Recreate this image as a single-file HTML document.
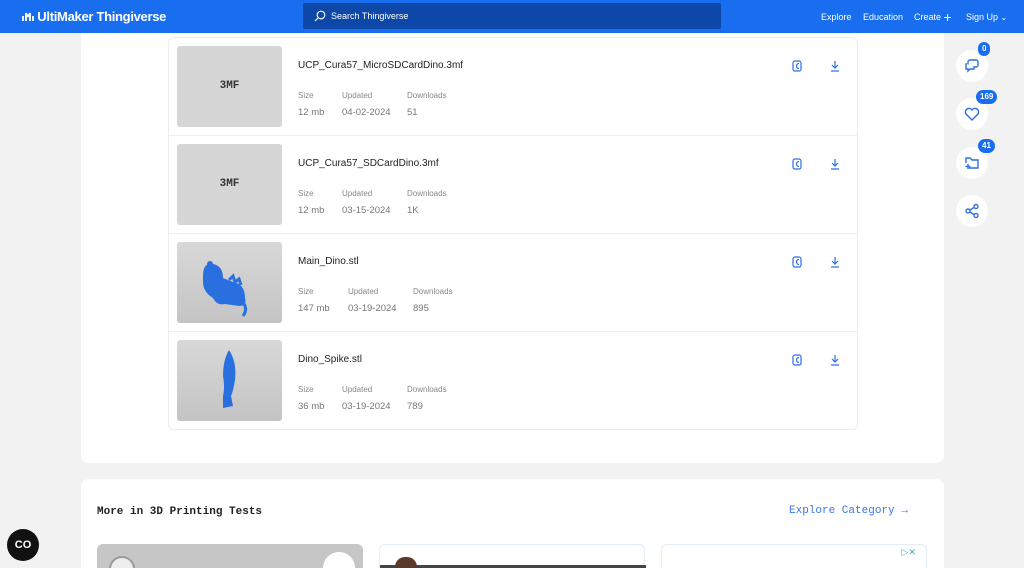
<!DOCTYPE html>
<html><head><meta charset="utf-8"><style>
*{box-sizing:border-box;margin:0;padding:0}
html,body{width:1024px;height:568px;overflow:hidden}
body{background:#f2f2f2;font-family:"Liberation Sans","DejaVu Sans",sans-serif;position:relative}
.hdr{position:absolute;left:0;top:0;width:1024px;height:33px;background:#196ef0;z-index:10}
.logo{position:absolute;left:22px;top:9px;color:#fff;font-size:13px;font-weight:bold;letter-spacing:-0.3px;white-space:nowrap}
.search{position:absolute;left:303px;top:3px;width:418px;height:26px;background:#0d47a8;border-radius:2px;color:#fff;font-size:9px}
.search span{position:absolute;left:28px;top:8px}
.nav{position:absolute;top:12px;color:#fff;font-size:9px;white-space:nowrap}
.card{position:absolute;left:81px;top:0;width:863px;height:463px;background:#fff;border-radius:0 0 8px 8px}
.list{position:absolute;left:168px;top:37px;width:690px;height:393px;border:1px solid #ececec;border-radius:6px;background:#fff}
.row{position:absolute;left:0;width:688px;height:98px;border-bottom:1px solid #eee}
.thumb{position:absolute;left:8px;top:8px;width:105px;height:81px;background:#d6d6d6;border-radius:3px;overflow:hidden;font-family:"Liberation Mono",monospace;font-weight:bold;font-size:11px;color:#333;text-align:center;line-height:81px}
.name{position:absolute;left:129px;top:22px;font-size:10px;color:#222}
.lab{position:absolute;top:53px;font-size:8px;color:#888}
.val{position:absolute;top:69px;font-size:9.5px;color:#777}
.ic{position:absolute;top:22px}
.side{position:absolute;left:956px;width:32px;height:32px;border-radius:50%;background:#fff}
.side svg{position:absolute;left:8px;top:8px}
.badge{position:absolute;height:14px;border-radius:7px;background:#196ef0;color:#fff;font-size:8px;font-weight:bold;text-align:center;line-height:14px;padding:0 4px;top:-8px;left:22px}
.card2{position:absolute;left:81px;top:479px;width:863px;height:89px;background:#fff;border-radius:8px 8px 0 0;overflow:hidden}
</style></head><body>
<div class="hdr">
 <div class="logo"><svg width="12" height="10" viewBox="0 0 12 10" style="vertical-align:-1px"><path d="M1 9V4M4 9V1M4 1L6 5M8 1L6 5M8 9V1M11 9V4" stroke="#fff" stroke-width="1.8" fill="none"/></svg> UltiMaker Thingiverse</div>
 <div class="search"><svg width="12" height="12" viewBox="0 0 12 12" style="position:absolute;left:11px;top:7px"><circle cx="7" cy="5" r="3.8" stroke="#fff" fill="none" stroke-width="1.1"/><path d="M4.3 7.7L1 11" stroke="#fff" stroke-width="1.1"/></svg><span>Search Thingiverse</span></div>
 <div class="nav" style="left:821px">Explore</div>
 <div class="nav" style="left:863px">Education</div>
 <div class="nav" style="left:914px;top:9px">Create <span style="font-size:14px;vertical-align:-2px">+</span></div>
 <div class="nav" style="left:966px">Sign Up <span style="font-size:8px">&#8964;</span></div>
</div>
<div class="card"></div>
<div class="list">
 <div class="row" style="top:0">
  <div class="thumb">3MF</div><div class="name">UCP_Cura57_MicroSDCardDino.3mf</div>
  <div class="lab" style="left:129px">Size</div><div class="lab" style="left:173px">Updated</div><div class="lab" style="left:238px">Downloads</div>
  <div class="val" style="left:129px">12 mb</div><div class="val" style="left:173px">04-02-2024</div><div class="val" style="left:238px">51</div>
  <svg class="ic" style="left:623px" width="10" height="12" viewBox="0 0 10 12"><rect x="1" y="1" width="8" height="10" rx="2" stroke="#2f6fe0" fill="none" stroke-width="1.2"/><path d="M7 3.5A2.5 2.5 0 1 0 7 8.5" stroke="#2f6fe0" fill="none" stroke-width="1.2"/></svg>
  <svg class="ic" style="left:661px" width="10" height="12" viewBox="0 0 10 12"><path d="M5 1V8M2 5L5 8L8 5M1 11H9" stroke="#2f6fe0" fill="none" stroke-width="1.2"/></svg>
 </div>
 <div class="row" style="top:98px">
  <div class="thumb">3MF</div><div class="name">UCP_Cura57_SDCardDino.3mf</div>
  <div class="lab" style="left:129px">Size</div><div class="lab" style="left:173px">Updated</div><div class="lab" style="left:238px">Downloads</div>
  <div class="val" style="left:129px">12 mb</div><div class="val" style="left:173px">03-15-2024</div><div class="val" style="left:238px">1K</div>
  <svg class="ic" style="left:623px" width="10" height="12" viewBox="0 0 10 12"><rect x="1" y="1" width="8" height="10" rx="2" stroke="#2f6fe0" fill="none" stroke-width="1.2"/><path d="M7 3.5A2.5 2.5 0 1 0 7 8.5" stroke="#2f6fe0" fill="none" stroke-width="1.2"/></svg>
  <svg class="ic" style="left:661px" width="10" height="12" viewBox="0 0 10 12"><path d="M5 1V8M2 5L5 8L8 5M1 11H9" stroke="#2f6fe0" fill="none" stroke-width="1.2"/></svg>
 </div>
 <div class="row" style="top:196px">
  <div class="thumb" style="background:linear-gradient(#d8d8d8,#c4c4c4)"><svg width="105" height="81" viewBox="0 0 105 81" style="position:absolute;left:0;top:0"><path d="M26 34Q26 20 36 22Q46 24 46 36L56 40Q68 42 68 56Q70 64 62 64L48 62Q40 64 36 56Q26 50 26 40Z" fill="#2a6fe0"/><path d="M52 38l4-4 2 6 4-3 2 6M64 58Q72 66 66 74" stroke="#2a6fe0" stroke-width="3" fill="none"/><circle cx="33" cy="22" r="3" fill="#2a6fe0"/></svg></div>
  <div class="name">Main_Dino.stl</div>
  <div class="lab" style="left:129px">Size</div><div class="lab" style="left:179px">Updated</div><div class="lab" style="left:244px">Downloads</div>
  <div class="val" style="left:129px">147 mb</div><div class="val" style="left:179px">03-19-2024</div><div class="val" style="left:244px">895</div>
  <svg class="ic" style="left:623px" width="10" height="12" viewBox="0 0 10 12"><rect x="1" y="1" width="8" height="10" rx="2" stroke="#2f6fe0" fill="none" stroke-width="1.2"/><path d="M7 3.5A2.5 2.5 0 1 0 7 8.5" stroke="#2f6fe0" fill="none" stroke-width="1.2"/></svg>
  <svg class="ic" style="left:661px" width="10" height="12" viewBox="0 0 10 12"><path d="M5 1V8M2 5L5 8L8 5M1 11H9" stroke="#2f6fe0" fill="none" stroke-width="1.2"/></svg>
 </div>
 <div class="row" style="top:294px;border-bottom:none">
  <div class="thumb" style="background:linear-gradient(#d8d8d8,#c4c4c4)"><svg width="105" height="81" viewBox="0 0 105 81" style="position:absolute;left:0;top:0"><path d="M52 10Q60 22 58 40Q56 52 54 56L56 66L46 68L46 56Q48 48 46 36Q46 20 52 10Z" fill="#2a6fe0"/></svg></div>
  <div class="name">Dino_Spike.stl</div>
  <div class="lab" style="left:129px">Size</div><div class="lab" style="left:173px">Updated</div><div class="lab" style="left:238px">Downloads</div>
  <div class="val" style="left:129px">36 mb</div><div class="val" style="left:173px">03-19-2024</div><div class="val" style="left:238px">789</div>
  <svg class="ic" style="left:623px" width="10" height="12" viewBox="0 0 10 12"><rect x="1" y="1" width="8" height="10" rx="2" stroke="#2f6fe0" fill="none" stroke-width="1.2"/><path d="M7 3.5A2.5 2.5 0 1 0 7 8.5" stroke="#2f6fe0" fill="none" stroke-width="1.2"/></svg>
  <svg class="ic" style="left:661px" width="10" height="12" viewBox="0 0 10 12"><path d="M5 1V8M2 5L5 8L8 5M1 11H9" stroke="#2f6fe0" fill="none" stroke-width="1.2"/></svg>
 </div>
</div>
<div class="side" style="top:50px"><svg width="16" height="16" viewBox="0 0 16 16"><rect x="4" y="2" width="10" height="7" rx="2" stroke="#2f6fe0" fill="none" stroke-width="1.4"/><path d="M3 6H2V11H4V13L6 11H10V9" stroke="#2f6fe0" fill="#fff" stroke-width="1.4"/></svg><div class="badge">0</div></div>
<div class="side" style="top:98px"><svg width="16" height="16" viewBox="0 0 16 16"><path d="M8 14L2 8A3.3 3.3 0 0 1 8 4A3.3 3.3 0 0 1 14 8Z" stroke="#2f6fe0" fill="none" stroke-width="1.4"/></svg><div class="badge" style="left:20px">169</div></div>
<div class="side" style="top:147px"><svg width="16" height="16" viewBox="0 0 16 16"><path d="M2 8V3H6L8 5H14V13H5" stroke="#2f6fe0" fill="none" stroke-width="1.4"/><path d="M4 9V14M1.5 11.5H6.5" stroke="#2f6fe0" stroke-width="1.4"/></svg><div class="badge">41</div></div>
<div class="side" style="top:195px"><svg width="16" height="16" viewBox="0 0 16 16"><circle cx="12" cy="3.5" r="2" stroke="#2f6fe0" fill="none" stroke-width="1.4"/><circle cx="4" cy="8" r="2" stroke="#2f6fe0" fill="none" stroke-width="1.4"/><circle cx="12" cy="12.5" r="2" stroke="#2f6fe0" fill="none" stroke-width="1.4"/><path d="M6 7L10 4.5M6 9L10 11.5" stroke="#2f6fe0" stroke-width="1.4"/></svg></div>
<div class="card2">
 <div style="position:absolute;left:16px;top:27px;font-family:'Liberation Mono',monospace;font-size:11px;font-weight:bold;color:#222">More in 3D Printing Tests</div>
 <div style="position:absolute;left:708px;top:26px;font-family:'Liberation Mono',monospace;font-size:11px;color:#3a78e0">Explore Category &#8594;</div>
 <div style="position:absolute;left:16px;top:65px;width:266px;height:40px;background:#c6c6c6;border-radius:6px"><div style="position:absolute;left:12px;top:12px;width:26px;height:26px;border-radius:50%;background:#eee;border:2px solid #999"></div><div style="position:absolute;left:226px;top:8px;width:32px;height:32px;border-radius:50%;background:#fff"></div></div>
 <div style="position:absolute;left:298px;top:65px;width:266px;height:40px;background:#fff;border:1px solid #e4ecf6;border-radius:6px"><div style="position:absolute;left:0;top:20px;width:266px;height:3px;background:#444"></div><div style="position:absolute;left:15px;top:12px;width:22px;height:28px;border-radius:10px;background:#5a3a2a"></div></div>
 <div style="position:absolute;left:580px;top:65px;width:266px;height:40px;background:#fff;border:1px solid #e4ecf6;border-radius:6px"><div style="position:absolute;right:10px;top:2px;font-size:9px;color:#4ab">&#9655;&#10005;</div></div>
</div>
<div style="position:absolute;left:7px;top:529px;width:32px;height:32px;border-radius:50%;background:#111;color:#fff;font-size:11px;font-weight:bold;text-align:center;line-height:32px">CO</div>
</body></html>
